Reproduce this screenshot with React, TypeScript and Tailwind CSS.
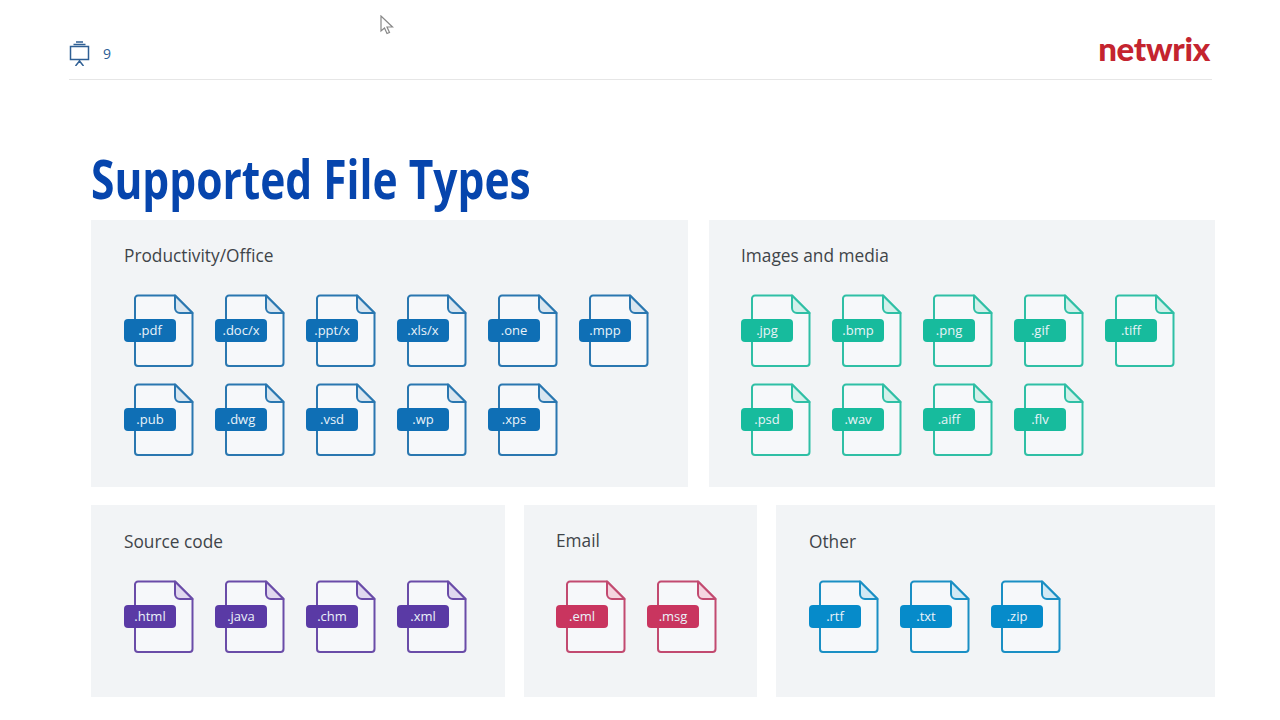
const Tile = ({ ext, stroke, fill, tint }: { ext: string; stroke: string; fill: string; tint: string }) => (
  <div className="relative w-[70px] h-[74px] pl-[9px]">
    <svg width="61" height="74" viewBox="0 0 61 74" fill="none">
      <path d="M5 1.5H42L59.5 19V69a3 3 0 0 1-3 3H5a3 3 0 0 1-3-3V4.5a3 3 0 0 1 3-3Z" fill="#f6f8fa" stroke={stroke} strokeWidth="2" strokeLinejoin="round" />
      <path d="M42 1.5L59.5 19H47a5 5 0 0 1-5-5Z" fill={tint} stroke={stroke} strokeWidth="2" strokeLinejoin="round" />
    </svg>
    <div className="absolute left-0 top-[25px] w-[52px] h-[23px] rounded-[4px] flex items-center justify-center text-[13px] text-[#eaf3f9]" style={{ backgroundColor: fill }}>
      {ext}
    </div>
  </div>
);

const blue = { stroke: "#2a77b0", fill: "#0f6fb5", tint: "#d9e6f0" };
const teal = { stroke: "#2fbfa5", fill: "#17bb9d", tint: "#d3f0ea" };
const purple = { stroke: "#6a4ca8", fill: "#5a3aa5", tint: "#e0d8ef" };
const red = { stroke: "#c24a70", fill: "#c9355f", tint: "#f5d5e0" };
const sky = { stroke: "#1a8fc4", fill: "#068bca", tint: "#d2e9f4" };

const Card = ({ title, exts, tone, cols, className, gridTop = "mt-[25px]" }: { title: string; exts: string[]; tone: typeof blue; cols: string; className: string; gridTop?: string }) => (
  <section className={`bg-[#f2f4f6] ${className}`}>
    <h2 className="text-[17.3px] leading-[26px] text-[#3f4449] font-normal">{title}</h2>
    <div className={`grid ${cols} gap-x-[21px] gap-y-[15px] ${gridTop}`}>
      {exts.map((e) => (
        <Tile key={e} ext={e} {...tone} />
      ))}
    </div>
  </section>
);

export default function App() {
  return (
    <div className="relative w-[1280px] h-[720px] bg-white overflow-hidden font-['Open_Sans',sans-serif]">
      <header className="mx-[69px] w-[1143px] h-[80px] border-b border-[#e6e6e6] flex items-start justify-between">
        <div className="flex items-center gap-[13px] mt-[41px]">
          <svg width="21" height="25" viewBox="0 0 21 25" fill="none" stroke="#2f5f94" strokeWidth="1.5">
            <path d="M7 1h7M4.5 3.5h12" />
            <rect x="1.5" y="5.5" width="18" height="13" />
            <path d="M10.5 18.5v2M10.5 20L6.5 25M10.5 20L14.5 25" />
          </svg>
          <span className="text-[14px] text-[#2a5d96]">9</span>
        </div>
        <div className="mt-[26px] mr-[2px] font-['Lato',sans-serif] font-black text-[33px] leading-[44px] tracking-[-0.3px] text-[#c4242f]">netwrix</div>
      </header>
      <main className="pl-[91px]">
        <div className="h-[140px] pt-[63px]">
          <h1 className="text-[54.5px] leading-[70px] font-bold text-[#0645ad] origin-left scale-x-[0.78] whitespace-nowrap">Supported File Types</h1>
        </div>
        <div className="flex gap-[21px] h-[267px]">
          <Card className="w-[597px] pl-[33px] pt-[23px]" title="Productivity/Office" tone={blue} cols="grid-cols-[70px_70px_70px_70px_70px_70px]"
            exts={[".pdf", ".doc/x", ".ppt/x", ".xls/x", ".one", ".mpp", ".pub", ".dwg", ".vsd", ".wp", ".xps"]} />
          <Card className="w-[506px] pl-[32px] pt-[23px]" title="Images and media" tone={teal} cols="grid-cols-[70px_70px_70px_70px_70px]"
            exts={[".jpg", ".bmp", ".png", ".gif", ".tiff", ".psd", ".wav", ".aiff", ".flv"]} />
        </div>
        <div className="flex gap-[19px] h-[192px] mt-[18px]">
          <Card className="w-[414px] pl-[33px] pt-[24px]" title="Source code" tone={purple} cols="grid-cols-[70px_70px_70px_70px]" exts={[".html", ".java", ".chm", ".xml"]} />
          <Card className="w-[233px] pl-[32px] pt-[23px]" title="Email" tone={red} cols="grid-cols-[70px_70px]" gridTop="mt-[26px]" exts={[".eml", ".msg"]} />
          <Card className="w-[439px] pl-[33px] pt-[24px]" title="Other" tone={sky} cols="grid-cols-[70px_70px_70px]" exts={[".rtf", ".txt", ".zip"]} />
        </div>
      </main>
      <svg className="absolute left-[380px] top-[15px]" width="14" height="20" viewBox="0 0 14 20">
        <path d="M1 1V16L4.5 13L7 18.5L9.5 17.5L7 12H12.5Z" fill="#fff" stroke="#888" strokeWidth="1.2" />
      </svg>
    </div>
  );
}
